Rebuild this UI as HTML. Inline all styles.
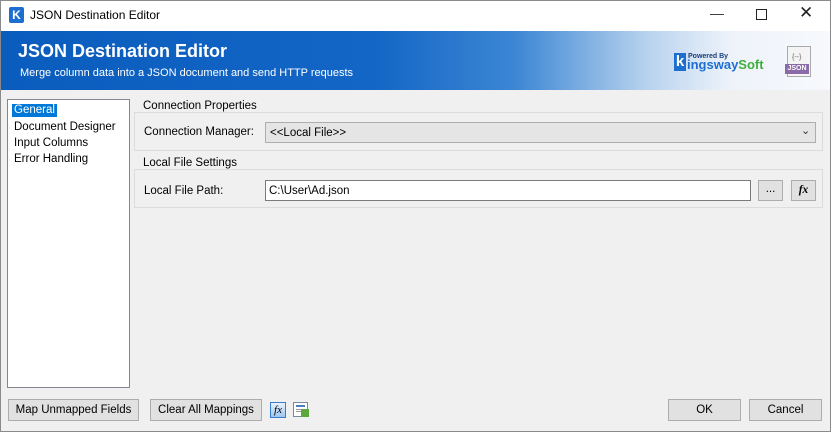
<!DOCTYPE html><html><head><style>
*{margin:0;padding:0;box-sizing:border-box}
body{width:831px;height:432px;background:#f0f0f0;font-family:"Liberation Sans",sans-serif;font-size:11.5px;color:#000;position:relative;overflow:hidden}
.a{position:absolute}
.btn{position:absolute;background:#e1e1e1;border:1px solid #adadad;text-align:center;line-height:21px;font-size:11.5px}
</style></head><body>
<div class="a" style="left:0;top:0;width:831px;height:31px;background:#fff"></div>
<div class="a" style="left:9px;top:7px;width:15px;height:16px;background:#1c6fd1;border-radius:2px;color:#fff;font-weight:bold;font-size:12px;text-align:center;line-height:16px">K</div>
<div class="a" style="left:30px;top:8px;font-size:12px">JSON Destination Editor</div>
<div class="a" style="left:710px;top:5px;font-size:14px;color:#333">&#8212;</div>
<div class="a" style="left:756px;top:9px;width:11px;height:11px;border:1px solid #222"></div>
<div class="a" style="left:799px;top:3px;font-size:17px;color:#222">&#10005;</div>
<div class="a" style="left:0;top:31px;width:831px;height:59px;background:linear-gradient(90deg,#0a5cbd 0%,#1366c6 45%,#3c86d4 62%,#b9d3ee 78%,#eef3fa 88%,#f7f9fc 100%)"></div>
<div class="a" style="left:18px;top:41px;color:#fff;font-weight:bold;font-size:18px">JSON Destination Editor</div>
<div class="a" style="left:20px;top:67px;color:#fff;font-size:11px">Merge column data into a JSON document and send HTTP requests</div>
<div class="a" style="left:674px;top:53px;width:12px;height:18px;background:#1c6fd1;color:#fff;font-weight:bold;font-size:15px;line-height:18px;text-align:center">k</div>
<div class="a" style="left:688px;top:53px;font-size:7px;font-weight:bold;color:#1a3e7a">Powered By</div>
<div class="a" style="left:687px;top:57px;font-size:13px;font-weight:bold;color:#1c6fd1">ingsway<span style="color:#3fae3f">Soft</span></div>
<div class="a" style="left:787px;top:46px;width:24px;height:31px;background:#f4f4f4;border:1px solid #aaa"></div>
<div class="a" style="left:792px;top:54px;font-size:7px;color:#666">{--}</div>
<div class="a" style="left:785px;top:64px;width:24px;height:10px;background:#8b6aa8;color:#fff;font-size:7px;font-weight:bold;text-align:center;line-height:10px">JSON</div>
<div class="a" style="left:7px;top:99px;width:123px;height:289px;background:#fff;border:1px solid #828790"></div>
<div class="a" style="left:12px;top:104px;background:#0078d7;color:#fff;padding:0 2px;line-height:13px">General</div>
<div class="a" style="left:14px;top:121px">Document Designer</div>
<div class="a" style="left:14px;top:137px">Input Columns</div>
<div class="a" style="left:14px;top:153px">Error Handling</div>
<div class="a" style="left:134px;top:99px;width:689px;height:52px;border:1px solid #dcdcdc"></div>
<div class="a" style="left:134px;top:99px;width:689px;height:14px;background:#f0f0f0;border-bottom:1px solid #dcdcdc"></div>
<div class="a" style="left:143px;top:100px">Connection Properties</div>
<div class="a" style="left:144px;top:126px">Connection Manager:</div>
<div class="a" style="left:265px;top:122px;width:551px;height:21px;background:#e5e5e5;border:1px solid #adadad;padding-left:4px;line-height:20px">&lt;&lt;Local File&gt;&gt;</div>
<div class="a" style="left:801px;top:124px;font-size:11px;color:#333">&#8964;</div>
<div class="a" style="left:134px;top:156px;width:689px;height:52px;border:1px solid #dcdcdc"></div>
<div class="a" style="left:134px;top:156px;width:689px;height:14px;background:#f0f0f0;border-bottom:1px solid #dcdcdc"></div>
<div class="a" style="left:143px;top:157px">Local File Settings</div>
<div class="a" style="left:144px;top:185px">Local File Path:</div>
<div class="a" style="left:265px;top:180px;width:486px;height:21px;background:#fff;border:1px solid #7a7a7a;padding-left:3px;line-height:20px">C:\User\Ad.json</div>
<div class="btn" style="left:758px;top:180px;width:25px;height:21px;line-height:17px">...</div>
<div class="btn" style="left:791px;top:180px;width:25px;height:21px;font-style:italic;font-weight:bold;font-family:'Liberation Serif',serif;line-height:19px">fx</div>
<div class="btn" style="left:8px;top:399px;width:131px;height:22px">Map Unmapped Fields</div>
<div class="btn" style="left:150px;top:399px;width:112px;height:22px">Clear All Mappings</div>
<div class="a" style="left:270px;top:402px;width:16px;height:16px;background:linear-gradient(#e9f3fd,#9cc6ef);border:1px solid #3a7ccb;font-style:italic;font-family:'Liberation Serif',serif;font-size:11px;text-align:center;line-height:14px">fx</div>
<div class="a" style="left:293px;top:402px;width:15px;height:15px;background:#fff;border:1px solid #7a8aa0"><div style="margin:2px;height:2px;background:#4a7ec0"></div><div style="margin:1px 2px;height:1px;background:#999"></div><div style="margin:1px 2px;height:1px;background:#999"></div></div>
<div class="a" style="left:301px;top:409px;width:8px;height:8px;background:#5ca83c"></div>
<div class="btn" style="left:668px;top:399px;width:73px;height:22px">OK</div>
<div class="btn" style="left:749px;top:399px;width:73px;height:22px">Cancel</div>
<div class="a" style="left:0;top:0;width:831px;height:432px;border:1px solid #8a8a8a;pointer-events:none"></div>
</body></html>
